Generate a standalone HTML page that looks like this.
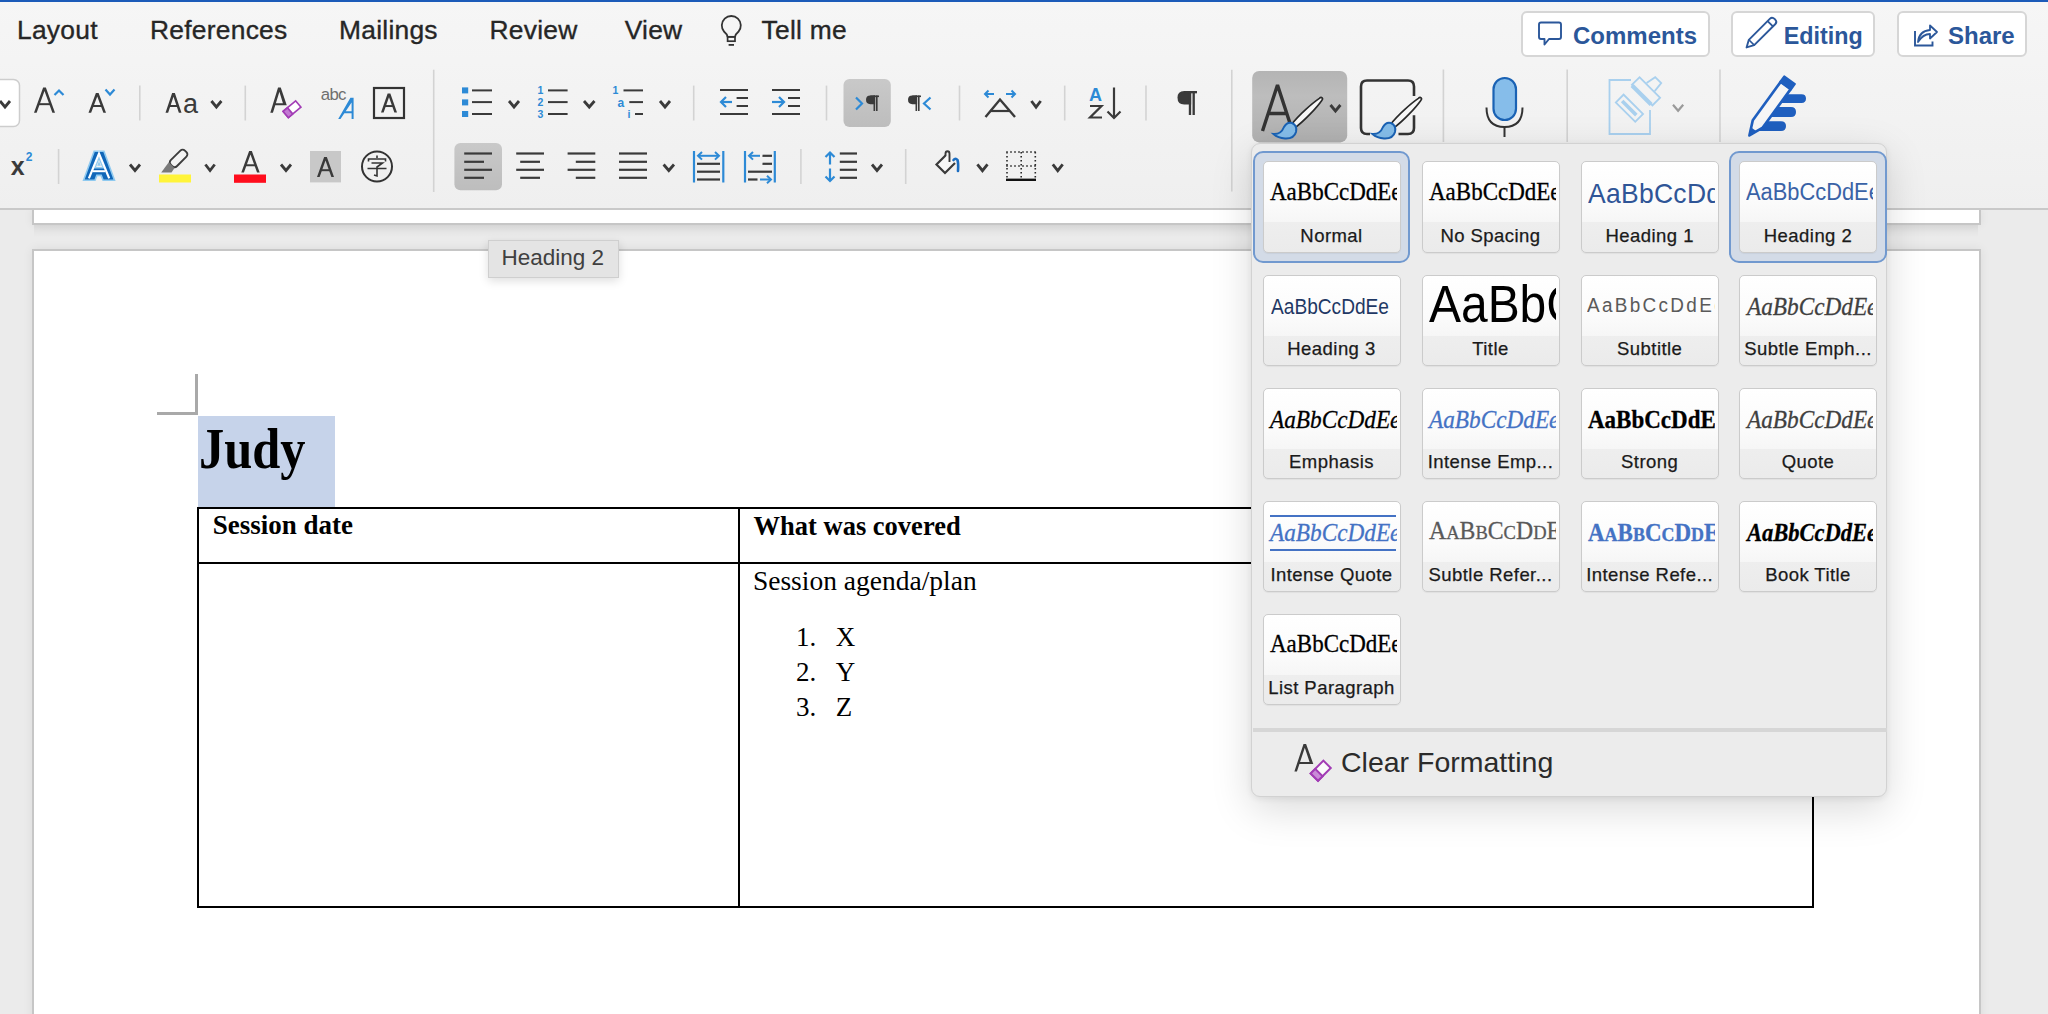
<!DOCTYPE html>
<html><head><meta charset="utf-8"><title>Word</title>
<style>
html,body{margin:0;padding:0;}
body{width:2048px;height:1014px;overflow:hidden;position:relative;background:#ebebeb;font-family:"Liberation Sans",sans-serif;}
.t{position:absolute;white-space:nowrap;line-height:1;}
.r{position:absolute;box-sizing:border-box;}
svg{position:absolute;left:0;top:0;overflow:visible}
</style></head><body>
<div class="r" style="left:0px;top:0px;width:2048px;height:210px;background:linear-gradient(#f6f6f6,#efefef);"></div>
<div class="r" style="left:0px;top:0px;width:2048px;height:2px;background:#1c5bb9;"></div>
<div class="r" style="left:0px;top:208px;width:2048px;height:2px;background:#c9c9c9;"></div>
<div class="r" style="left:0px;top:210px;width:2048px;height:804px;background:#ebebeb;"></div>
<div class="r" style="left:31.5px;top:210px;width:1949.0px;height:15px;background:#fff;border:2px solid #c6c6c6;border-top:none;box-shadow:0 0 10px rgba(0,0,0,0.07);clip-path:inset(0 -12px -12px -12px);"></div>
<div class="r" style="left:34px;top:225px;width:1944px;height:12px;background:linear-gradient(rgba(0,0,0,0.06),rgba(0,0,0,0));"></div>
<div class="r" style="left:31.5px;top:249px;width:1949.0px;height:781px;background:#fff;border:2px solid #c6c6c6;box-shadow:0 0 10px rgba(0,0,0,0.07);"></div>
<div class="r" style="left:0px;top:208px;width:2048px;height:2px;background:#c9c9c9;"></div>
<div class="t" style="left:17.0px;top:17.4px;font-family:'Liberation Sans', sans-serif;font-size:26.4px;font-weight:400;font-style:normal;color:#262626;-webkit-text-stroke:0.35px #262626;letter-spacing:0.25px;">Layout</div>
<div class="t" style="left:150.0px;top:17.4px;font-family:'Liberation Sans', sans-serif;font-size:26.4px;font-weight:400;font-style:normal;color:#262626;-webkit-text-stroke:0.35px #262626;letter-spacing:0.25px;">References</div>
<div class="t" style="left:339.0px;top:17.4px;font-family:'Liberation Sans', sans-serif;font-size:26.4px;font-weight:400;font-style:normal;color:#262626;-webkit-text-stroke:0.35px #262626;letter-spacing:0.25px;">Mailings</div>
<div class="t" style="left:489.5px;top:17.4px;font-family:'Liberation Sans', sans-serif;font-size:26.4px;font-weight:400;font-style:normal;color:#262626;-webkit-text-stroke:0.35px #262626;letter-spacing:0.25px;">Review</div>
<div class="t" style="left:624.7px;top:17.4px;font-family:'Liberation Sans', sans-serif;font-size:26.4px;font-weight:400;font-style:normal;color:#262626;-webkit-text-stroke:0.35px #262626;letter-spacing:0.25px;">View</div>
<div class="t" style="left:761.6px;top:17.4px;font-family:'Liberation Sans', sans-serif;font-size:26.4px;font-weight:400;font-style:normal;color:#262626;-webkit-text-stroke:0.35px #262626;letter-spacing:0.25px;">Tell me</div>
<div class="r" style="left:1520.5px;top:10.5px;width:189.20000000000005px;height:46.5px;background:#fff;border:2px solid #d6d6d6;border-radius:6px;"></div>
<div class="r" style="left:1731px;top:10.5px;width:144.29999999999995px;height:46.5px;background:#fff;border:2px solid #d6d6d6;border-radius:6px;"></div>
<div class="r" style="left:1896.6px;top:10.5px;width:130.9000000000001px;height:46.5px;background:#fff;border:2px solid #d6d6d6;border-radius:6px;"></div>
<div class="t" style="left:1573.0px;top:23.9px;font-family:'Liberation Sans', sans-serif;font-size:24px;font-weight:700;font-style:normal;color:#2b579a;">Comments</div>
<div class="t" style="left:1783.7px;top:24.5px;font-family:'Liberation Sans', sans-serif;font-size:23.3px;font-weight:700;font-style:normal;color:#2b579a;">Editing</div>
<div class="t" style="left:1948.0px;top:23.9px;font-family:'Liberation Sans', sans-serif;font-size:24px;font-weight:700;font-style:normal;color:#2b579a;">Share</div>
<div class="r" style="left:487.5px;top:239.5px;width:131.5px;height:38.5px;background:#e4e4e4;border:1px solid #cfcfcf;box-shadow:0 3px 9px rgba(0,0,0,0.13);"></div>
<div class="t" style="left:501.5px;top:246.7px;font-family:'Liberation Sans', sans-serif;font-size:22.5px;font-weight:400;font-style:normal;color:#404040;">Heading 2</div>
<div class="r" style="left:157px;top:412px;width:41px;height:3px;background:#a9a9a9;"></div>
<div class="r" style="left:195px;top:374px;width:3px;height:41px;background:#a9a9a9;"></div>
<div class="r" style="left:198px;top:416px;width:137px;height:91px;background:#c6d3ea;"></div>
<div class="t" style="left:199.0px;top:420.9px;font-family:'Liberation Serif', serif;font-size:56px;font-weight:700;font-style:normal;color:#000;transform:scaleX(0.9);transform-origin:0 0;">Judy</div>
<div class="r" style="left:197px;top:507px;width:1617px;height:401px;border:2px solid #000;"></div>
<div class="r" style="left:738px;top:507px;width:2px;height:401px;background:#000;"></div>
<div class="r" style="left:197px;top:562px;width:1617px;height:2px;background:#000;"></div>
<div class="t" style="left:212.7px;top:512.3px;font-family:'Liberation Serif', serif;font-size:27px;font-weight:700;font-style:normal;color:#000;">Session date</div>
<div class="t" style="left:753.6px;top:512.5px;font-family:'Liberation Serif', serif;font-size:26.5px;font-weight:700;font-style:normal;color:#000;">What was covered</div>
<div class="t" style="left:752.9px;top:566.8px;font-family:'Liberation Serif', serif;font-size:27.5px;font-weight:400;font-style:normal;color:#000;">Session agenda/plan</div>
<div class="t" style="left:796.0px;top:623.5px;font-family:'Liberation Serif', serif;font-size:27px;font-weight:400;font-style:normal;color:#000;">1.</div>
<div class="t" style="left:835.7px;top:623.5px;font-family:'Liberation Serif', serif;font-size:27px;font-weight:400;font-style:normal;color:#000;">X</div>
<div class="t" style="left:796.0px;top:658.9px;font-family:'Liberation Serif', serif;font-size:27px;font-weight:400;font-style:normal;color:#000;">2.</div>
<div class="t" style="left:835.7px;top:658.9px;font-family:'Liberation Serif', serif;font-size:27px;font-weight:400;font-style:normal;color:#000;">Y</div>
<div class="t" style="left:796.0px;top:694.3px;font-family:'Liberation Serif', serif;font-size:27px;font-weight:400;font-style:normal;color:#000;">3.</div>
<div class="t" style="left:835.7px;top:694.3px;font-family:'Liberation Serif', serif;font-size:27px;font-weight:400;font-style:normal;color:#000;">Z</div>
<svg width="2048" height="210" viewBox="0 0 2048 210"><defs><linearGradient id="selg" x1="0" y1="0" x2="0" y2="1"><stop offset="0" stop-color="#c9c9c9"/><stop offset="1" stop-color="#bdbdbd"/></linearGradient><linearGradient id="styg" x1="0" y1="0" x2="0" y2="1"><stop offset="0" stop-color="#b4b4b4"/><stop offset="0.35" stop-color="#bdbdbd"/><stop offset="1" stop-color="#b0b0b0"/></linearGradient></defs><rect x="843.5" y="79" width="47.3" height="48" rx="6" fill="url(#selg)"/><rect x="454.4" y="143" width="47.6" height="47.2" rx="6" fill="url(#selg)"/><rect x="1252.2" y="71" width="95" height="71.4" rx="7" fill="url(#styg)"/><rect x="-10" y="79.5" width="29.5" height="47" rx="6" fill="#fff" stroke="#cdcdcd" stroke-width="1.5"/><polyline points="0,101 5.0,107 10,101" stroke="#3a3a3a" stroke-width="2.8" fill="none" stroke-linejoin="miter" stroke-linecap="butt"/><path d="M34.00,112.70 L43.14,87.60 L45.86,87.60 L55.00,112.70 L52.36,112.70 L44.50,91.11 L36.64,112.70 Z" fill="#3a3a3a"/><rect x="38.43" y="103.18" width="12.15" height="1.98" fill="#3a3a3a"/><polyline points="54.5,95 59,90.5 63.5,95" stroke="#2d8ad6" stroke-width="2.2" fill="none" stroke-linejoin="miter" stroke-linecap="butt"/><path d="M88.50,112.70 L95.89,93.00 L98.61,93.00 L106.00,112.70 L103.36,112.70 L97.25,96.40 L91.14,112.70 Z" fill="#3a3a3a"/><rect x="92.33" y="105.01" width="9.84" height="1.98" fill="#3a3a3a"/><polyline points="105.5,89.5 110,94.5 114.5,89.5" stroke="#2d8ad6" stroke-width="2.2" fill="none" stroke-linejoin="miter" stroke-linecap="butt"/><line x1="139.8" y1="85.6" x2="139.8" y2="120.5" stroke="#d3d3d3" stroke-width="1.6" stroke-linecap="butt"/><path d="M165.50,112.70 L172.14,93.00 L174.86,93.00 L181.50,112.70 L178.86,112.70 L173.50,96.79 L168.14,112.70 Z" fill="#3a3a3a"/><rect x="169.08" y="105.01" width="8.85" height="1.98" fill="#3a3a3a"/><text x="183" y="112.7" font-family="Liberation Sans" font-size="27" font-weight="400" font-style="normal" fill="#3a3a3a" >a</text><polyline points="211.4,101 216.4,107 221.4,101" stroke="#3a3a3a" stroke-width="2.8" fill="none" stroke-linejoin="miter" stroke-linecap="butt"/><line x1="245.3" y1="85.6" x2="245.3" y2="120.5" stroke="#d3d3d3" stroke-width="1.6" stroke-linecap="butt"/><path fill-rule="evenodd" d="M270.30,112.70 L278.04,87.60 L280.76,87.60 L286.77,105.16 L275.27,105.16 L272.94,112.70 Z M279.40,91.74 L275.88,103.18 L282.92,103.18 Z" fill="#3a3a3a"/><g transform="translate(292,109.3) rotate(-40) scale(0.82)"><rect x="-10" y="-5" width="20" height="10" fill="#fff" stroke="#a23cb5" stroke-width="2"/><rect x="-10" y="-5" width="7" height="10" fill="#c27ad2" stroke="#a23cb5" stroke-width="2"/></g><text x="320.8" y="100.3" font-family="Liberation Sans" font-size="16.8" font-weight="400" font-style="normal" fill="#6e6e6e" letter-spacing="-0.7">abc</text><path d="M338.2,119 L350.4,97.8 L353.6,97.8 L353.6,119 L351.6,119 L351.6,102.4 L340.5,119 Z M343.6,111.2 L352,111.2 L352,113.2 L342.4,113.2 Z" fill="#2d8ad6"/><rect x="374" y="88" width="30" height="30" fill="none" stroke="#333" stroke-width="2.2"/><path d="M381.00,112.50 L387.64,93.50 L390.36,93.50 L397.00,112.50 L394.36,112.50 L389.00,97.15 L383.64,112.50 Z" fill="#3a3a3a"/><rect x="384.58" y="105.05" width="8.85" height="1.98" fill="#3a3a3a"/><line x1="433.7" y1="69.7" x2="433.7" y2="192" stroke="#d3d3d3" stroke-width="1.6"/><rect x="462" y="87.4" width="6.2" height="6" fill="#2d8ad6"/><rect x="462" y="99.4" width="6.2" height="6" fill="#2d8ad6"/><rect x="462" y="111" width="6.2" height="6" fill="#2d8ad6"/><line x1="472" y1="90.4" x2="492" y2="90.4" stroke="#3a3a3a" stroke-width="2" stroke-linecap="butt"/><line x1="472" y1="102.1" x2="492" y2="102.1" stroke="#3a3a3a" stroke-width="2" stroke-linecap="butt"/><line x1="472" y1="114" x2="492" y2="114" stroke="#3a3a3a" stroke-width="2" stroke-linecap="butt"/><polyline points="509,101 514.0,107 519,101" stroke="#3a3a3a" stroke-width="2.8" fill="none" stroke-linejoin="miter" stroke-linecap="butt"/><text x="537.5" y="94" font-family="Liberation Sans" font-size="10.5" font-weight="700" font-style="normal" fill="#2d8ad6" >1</text><text x="537.5" y="105.8" font-family="Liberation Sans" font-size="10.5" font-weight="700" font-style="normal" fill="#2d8ad6" >2</text><text x="537.5" y="117.5" font-family="Liberation Sans" font-size="10.5" font-weight="700" font-style="normal" fill="#2d8ad6" >3</text><line x1="548" y1="90.4" x2="567.6" y2="90.4" stroke="#3a3a3a" stroke-width="2" stroke-linecap="butt"/><line x1="548" y1="102.1" x2="567.6" y2="102.1" stroke="#3a3a3a" stroke-width="2" stroke-linecap="butt"/><line x1="548" y1="114" x2="567.6" y2="114" stroke="#3a3a3a" stroke-width="2" stroke-linecap="butt"/><polyline points="584,101 589.25,107 594.5,101" stroke="#3a3a3a" stroke-width="2.8" fill="none" stroke-linejoin="miter" stroke-linecap="butt"/><text x="612.5" y="94" font-family="Liberation Sans" font-size="10.5" font-weight="700" font-style="normal" fill="#2d8ad6" >1</text><text x="617.5" y="106.5" font-family="Liberation Sans" font-size="12" font-weight="700" font-style="normal" fill="#2d8ad6" >a</text><text x="627.5" y="118" font-family="Liberation Sans" font-size="10.5" font-weight="700" font-style="normal" fill="#2d8ad6" >i</text><line x1="623.5" y1="90.4" x2="643" y2="90.4" stroke="#3a3a3a" stroke-width="2" stroke-linecap="butt"/><line x1="629.3" y1="102.1" x2="643" y2="102.1" stroke="#3a3a3a" stroke-width="2" stroke-linecap="butt"/><line x1="635" y1="114" x2="643" y2="114" stroke="#3a3a3a" stroke-width="2" stroke-linecap="butt"/><polyline points="660,101 665.0,107 670,101" stroke="#3a3a3a" stroke-width="2.8" fill="none" stroke-linejoin="miter" stroke-linecap="butt"/><line x1="693.7" y1="85.6" x2="693.7" y2="120.5" stroke="#d3d3d3" stroke-width="1.6" stroke-linecap="butt"/><line x1="720" y1="90" x2="748" y2="90" stroke="#3a3a3a" stroke-width="2" stroke-linecap="butt"/><line x1="720" y1="114" x2="748" y2="114" stroke="#3a3a3a" stroke-width="2" stroke-linecap="butt"/><line x1="736.6" y1="98" x2="748" y2="98" stroke="#3a3a3a" stroke-width="2" stroke-linecap="butt"/><line x1="736.6" y1="106" x2="748" y2="106" stroke="#3a3a3a" stroke-width="2" stroke-linecap="butt"/><polyline points="726,97 721,102 726,107" stroke="#2d8ad6" stroke-width="2.2" fill="none" stroke-linejoin="miter" stroke-linecap="butt"/><line x1="721" y1="102" x2="732" y2="102" stroke="#2d8ad6" stroke-width="2.2" stroke-linecap="butt"/><line x1="772" y1="90" x2="800" y2="90" stroke="#3a3a3a" stroke-width="2" stroke-linecap="butt"/><line x1="772" y1="114" x2="800" y2="114" stroke="#3a3a3a" stroke-width="2" stroke-linecap="butt"/><line x1="788" y1="98" x2="800" y2="98" stroke="#3a3a3a" stroke-width="2" stroke-linecap="butt"/><line x1="788" y1="106" x2="800" y2="106" stroke="#3a3a3a" stroke-width="2" stroke-linecap="butt"/><polyline points="779,97 784,102 779,107" stroke="#2d8ad6" stroke-width="2.2" fill="none" stroke-linejoin="miter" stroke-linecap="butt"/><line x1="772" y1="102" x2="783.5" y2="102" stroke="#2d8ad6" stroke-width="2.2" stroke-linecap="butt"/><line x1="826.5" y1="85.6" x2="826.5" y2="120.5" stroke="#d3d3d3" stroke-width="1.6" stroke-linecap="butt"/><polyline points="856,97.5 862,103.5 856,109.5" stroke="#2d8ad6" stroke-width="2.2" fill="none" stroke-linejoin="miter" stroke-linecap="butt"/><path d="M875.12,95.5 H870.34 Q866,95.5 866,99.84 Q866,104.18 870.34,104.18 H875.12 Z" fill="#3a3a3a"/><rect x="873.5200000000001" y="95.5" width="1.6" height="15.5" fill="#3a3a3a"/><rect x="875.99" y="95.5" width="1.6" height="15.5" fill="#3a3a3a"/><rect x="870.34" y="95.5" width="8.66" height="1.6" fill="#3a3a3a"/><path d="M917.12,95.5 H912.34 Q908,95.5 908,99.84 Q908,104.18 912.34,104.18 H917.12 Z" fill="#3a3a3a"/><rect x="915.5200000000001" y="95.5" width="1.6" height="15.5" fill="#3a3a3a"/><rect x="917.99" y="95.5" width="1.6" height="15.5" fill="#3a3a3a"/><rect x="912.34" y="95.5" width="8.66" height="1.6" fill="#3a3a3a"/><polyline points="930.5,97.5 924,103.5 930.5,109.5" stroke="#2d8ad6" stroke-width="2.2" fill="none" stroke-linejoin="miter" stroke-linecap="butt"/><line x1="959.5" y1="85.6" x2="959.5" y2="120.5" stroke="#d3d3d3" stroke-width="1.6" stroke-linecap="butt"/><path d="M985.5,117 L1000,99.5 L1015,117" stroke="#3a3a3a" stroke-width="2.4" fill="none"/><line x1="990" y1="111" x2="1010" y2="111" stroke="#3a3a3a" stroke-width="2.2" stroke-linecap="butt"/><polyline points="988.5,90.5 985,94 988.5,97.5" stroke="#2d8ad6" stroke-width="2" fill="none" stroke-linejoin="miter" stroke-linecap="butt"/><line x1="985" y1="94" x2="994" y2="94" stroke="#2d8ad6" stroke-width="2" stroke-linecap="butt"/><polyline points="1011.5,90.5 1015,94 1011.5,97.5" stroke="#2d8ad6" stroke-width="2" fill="none" stroke-linejoin="miter" stroke-linecap="butt"/><line x1="1006" y1="94" x2="1015" y2="94" stroke="#2d8ad6" stroke-width="2" stroke-linecap="butt"/><polyline points="1031.4,101 1036.0500000000002,107.2 1040.7,101" stroke="#3a3a3a" stroke-width="2.8" fill="none" stroke-linejoin="miter" stroke-linecap="butt"/><line x1="1064.7" y1="85.6" x2="1064.7" y2="120.5" stroke="#d3d3d3" stroke-width="1.6" stroke-linecap="butt"/><text x="1089" y="100.8" font-family="Liberation Sans" font-size="18" font-weight="700" font-style="normal" fill="#2d8ad6" >A</text><path d="M1090,106 L1101.5,106 L1090,117.5 L1102,117.5" stroke="#3a3a3a" stroke-width="2.2" fill="none"/><line x1="1114" y1="87.5" x2="1114" y2="118" stroke="#3a3a3a" stroke-width="2.2" stroke-linecap="butt"/><polyline points="1107.5,111.5 1114,118 1120.5,111.5" stroke="#3a3a3a" stroke-width="2.2" fill="none" stroke-linejoin="miter" stroke-linecap="butt"/><line x1="1146" y1="85.6" x2="1146" y2="120.5" stroke="#d3d3d3" stroke-width="1.6" stroke-linecap="butt"/><path d="M1191.15,91 H1184.22 Q1177.5,91 1177.5,97.72 Q1177.5,104.44 1184.22,104.44 H1191.15 Z" fill="#3a3a3a"/><rect x="1188.81" y="91" width="2.34" height="24" fill="#3a3a3a"/><rect x="1192.5149999999999" y="91" width="2.34" height="24" fill="#3a3a3a"/><rect x="1184.22" y="91" width="12.78" height="2.34" fill="#3a3a3a"/><text x="10.8" y="174.8" font-family="Liberation Sans" font-size="25" font-weight="700" font-style="normal" fill="#3a3a3a" >x</text><text x="25.8" y="160.5" font-family="Liberation Sans" font-size="12" font-weight="700" font-style="normal" fill="#2d8ad6" >2</text><line x1="58.6" y1="149" x2="58.6" y2="184" stroke="#d3d3d3" stroke-width="1.6" stroke-linecap="butt"/><path fill-rule="evenodd" d="M83.6,180.3 L94.2,151.2 L103.9,151.2 L114.5,180.3 L103.1,180.3 L101.2,175.4 L96.8,175.4 L95,180.3 Z M99,157.6 L94.9,167.8 L103.2,167.8 Z" fill="#1066b8" stroke="#8fcaf0" stroke-width="1.6" stroke-linejoin="miter"/><polyline points="88.9,178.4 99,153.6 109.2,178.4" fill="none" stroke="#fff" stroke-width="2.2" stroke-linejoin="miter"/><line x1="92.8" y1="171.2" x2="105.2" y2="171.2" stroke="#fff" stroke-width="2"/><path d="M97.2,165.8 L99,161 L100.8,165.8 Z" fill="#8fcaf0"/><polyline points="130,164.5 135.0,170.5 140,164.5" stroke="#3a3a3a" stroke-width="2.8" fill="none" stroke-linejoin="miter" stroke-linecap="butt"/><g transform="translate(178.6,158.4) rotate(-45)"><rect x="-10" y="-4.3" width="20" height="8.6" rx="3.2" fill="#f4f4f4" stroke="#3d3d3d" stroke-width="1.9"/></g><path d="M168.8,162.3 L174.5,168 L171.5,172.6 L161.2,172.6 Z" fill="#7a7a7a"/><rect x="159" y="174.5" width="32" height="8" fill="#fff43a"/><polyline points="205.4,164.5 210.05,170.5 214.7,164.5" stroke="#3a3a3a" stroke-width="2.8" fill="none" stroke-linejoin="miter" stroke-linecap="butt"/><path d="M241.30,172.60 L249.14,151.00 L251.86,151.00 L259.70,172.60 L257.06,172.60 L250.50,154.52 L243.94,172.60 Z" fill="#3a3a3a"/><rect x="245.28" y="164.27" width="10.43" height="1.98" fill="#3a3a3a"/><rect x="234" y="174.5" width="32" height="8.3" fill="#ff0d1d"/><polyline points="281,164.5 286.0,170.5 291,164.5" stroke="#3a3a3a" stroke-width="2.8" fill="none" stroke-linejoin="miter" stroke-linecap="butt"/><rect x="310" y="151" width="31" height="31.4" fill="#c8c8c8"/><path d="M317.00,177.00 L324.14,157.00 L326.86,157.00 L334.00,177.00 L331.36,177.00 L325.50,160.58 L319.64,177.00 Z" fill="#3a3a3a"/><rect x="320.75" y="169.21" width="9.51" height="1.98" fill="#3a3a3a"/><circle cx="377" cy="166.5" r="15" fill="none" stroke="#333" stroke-width="2"/><path d="M377,155.5 L377,158 M368.5,161.5 L368.5,159 L385.5,159 L385.5,161.5 M371.5,163 L382.5,163 L377,167 L377,176 L374,175 M367.5,168.5 L386.5,168.5" stroke="#333" stroke-width="1.6" fill="none"/><line x1="464.2" y1="153.5" x2="492" y2="153.5" stroke="#3a3a3a" stroke-width="2.2" stroke-linecap="butt"/><line x1="464.2" y1="161.8" x2="484" y2="161.8" stroke="#3a3a3a" stroke-width="2.2" stroke-linecap="butt"/><line x1="464.2" y1="169.8" x2="492" y2="169.8" stroke="#3a3a3a" stroke-width="2.2" stroke-linecap="butt"/><line x1="464.2" y1="177.8" x2="484" y2="177.8" stroke="#3a3a3a" stroke-width="2.2" stroke-linecap="butt"/><line x1="516.2" y1="153.5" x2="544" y2="153.5" stroke="#3a3a3a" stroke-width="2.2" stroke-linecap="butt"/><line x1="520.2" y1="161.8" x2="540" y2="161.8" stroke="#3a3a3a" stroke-width="2.2" stroke-linecap="butt"/><line x1="516.2" y1="169.8" x2="544" y2="169.8" stroke="#3a3a3a" stroke-width="2.2" stroke-linecap="butt"/><line x1="520.2" y1="177.8" x2="540" y2="177.8" stroke="#3a3a3a" stroke-width="2.2" stroke-linecap="butt"/><line x1="567.6" y1="153.5" x2="595.3" y2="153.5" stroke="#3a3a3a" stroke-width="2.2" stroke-linecap="butt"/><line x1="575.8" y1="161.8" x2="595.3" y2="161.8" stroke="#3a3a3a" stroke-width="2.2" stroke-linecap="butt"/><line x1="567.6" y1="169.8" x2="595.3" y2="169.8" stroke="#3a3a3a" stroke-width="2.2" stroke-linecap="butt"/><line x1="575.8" y1="177.8" x2="595.3" y2="177.8" stroke="#3a3a3a" stroke-width="2.2" stroke-linecap="butt"/><line x1="619" y1="153.5" x2="647" y2="153.5" stroke="#3a3a3a" stroke-width="2.2" stroke-linecap="butt"/><line x1="619" y1="161.8" x2="647" y2="161.8" stroke="#3a3a3a" stroke-width="2.2" stroke-linecap="butt"/><line x1="619" y1="169.8" x2="647" y2="169.8" stroke="#3a3a3a" stroke-width="2.2" stroke-linecap="butt"/><line x1="619" y1="177.8" x2="647" y2="177.8" stroke="#3a3a3a" stroke-width="2.2" stroke-linecap="butt"/><polyline points="663.6,164.5 668.8,170.5 674,164.5" stroke="#3a3a3a" stroke-width="2.8" fill="none" stroke-linejoin="miter" stroke-linecap="butt"/><line x1="694" y1="151" x2="694" y2="182.5" stroke="#2d8ad6" stroke-width="2.2" stroke-linecap="butt"/><line x1="723.3" y1="151" x2="723.3" y2="182.5" stroke="#2d8ad6" stroke-width="2.2" stroke-linecap="butt"/><line x1="698" y1="155.8" x2="719" y2="155.8" stroke="#2d8ad6" stroke-width="2" stroke-linecap="butt"/><polyline points="702,152 698,155.8 702,159.6" stroke="#2d8ad6" stroke-width="2" fill="none" stroke-linejoin="miter" stroke-linecap="butt"/><polyline points="715,152 719,155.8 715,159.6" stroke="#2d8ad6" stroke-width="2" fill="none" stroke-linejoin="miter" stroke-linecap="butt"/><line x1="697" y1="163.8" x2="720" y2="163.8" stroke="#3a3a3a" stroke-width="2.2" stroke-linecap="butt"/><line x1="697" y1="171.7" x2="720" y2="171.7" stroke="#3a3a3a" stroke-width="2.2" stroke-linecap="butt"/><line x1="697" y1="179.5" x2="720" y2="179.5" stroke="#3a3a3a" stroke-width="2.2" stroke-linecap="butt"/><line x1="745" y1="151" x2="745" y2="182.5" stroke="#2d8ad6" stroke-width="2.2" stroke-linecap="butt"/><line x1="774.8" y1="151" x2="774.8" y2="182.5" stroke="#2d8ad6" stroke-width="2.2" stroke-linecap="butt"/><line x1="749" y1="155.8" x2="760" y2="155.8" stroke="#2d8ad6" stroke-width="2" stroke-linecap="butt"/><polyline points="753,152 749,155.8 753,159.6" stroke="#2d8ad6" stroke-width="2" fill="none" stroke-linejoin="miter" stroke-linecap="butt"/><line x1="762.5" y1="155.8" x2="772" y2="155.8" stroke="#3a3a3a" stroke-width="2.2" stroke-linecap="butt"/><line x1="762.5" y1="163.8" x2="772" y2="163.8" stroke="#3a3a3a" stroke-width="2.2" stroke-linecap="butt"/><line x1="748" y1="171.7" x2="772" y2="171.7" stroke="#3a3a3a" stroke-width="2.2" stroke-linecap="butt"/><line x1="748" y1="179.5" x2="757.5" y2="179.5" stroke="#3a3a3a" stroke-width="2.2" stroke-linecap="butt"/><line x1="760" y1="179.5" x2="771" y2="179.5" stroke="#2d8ad6" stroke-width="2" stroke-linecap="butt"/><polyline points="767,175.7 771,179.5 767,183.3" stroke="#2d8ad6" stroke-width="2" fill="none" stroke-linejoin="miter" stroke-linecap="butt"/><line x1="800.9" y1="149" x2="800.9" y2="184" stroke="#d3d3d3" stroke-width="1.6" stroke-linecap="butt"/><line x1="830" y1="152.5" x2="830" y2="164.5" stroke="#2d8ad6" stroke-width="2.2" stroke-linecap="butt"/><line x1="830" y1="168.5" x2="830" y2="181" stroke="#2d8ad6" stroke-width="2.2" stroke-linecap="butt"/><polyline points="825.5,157 830,152.5 834.5,157" stroke="#2d8ad6" stroke-width="2.2" fill="none" stroke-linejoin="miter" stroke-linecap="butt"/><polyline points="825.5,176.5 830,181 834.5,176.5" stroke="#2d8ad6" stroke-width="2.2" fill="none" stroke-linejoin="miter" stroke-linecap="butt"/><line x1="839.8" y1="153.5" x2="857" y2="153.5" stroke="#3a3a3a" stroke-width="2.2" stroke-linecap="butt"/><line x1="839.8" y1="161.8" x2="857" y2="161.8" stroke="#3a3a3a" stroke-width="2.2" stroke-linecap="butt"/><line x1="839.8" y1="169.8" x2="857" y2="169.8" stroke="#3a3a3a" stroke-width="2.2" stroke-linecap="butt"/><line x1="839.8" y1="177.8" x2="857" y2="177.8" stroke="#3a3a3a" stroke-width="2.2" stroke-linecap="butt"/><polyline points="872,164.5 877.0,170.5 882,164.5" stroke="#3a3a3a" stroke-width="2.8" fill="none" stroke-linejoin="miter" stroke-linecap="butt"/><line x1="905.7" y1="149" x2="905.7" y2="184" stroke="#d3d3d3" stroke-width="1.6" stroke-linecap="butt"/><path d="M945.5,155.5 L936.5,164.5 L945,173 L955,163" fill="#f8f8f8" stroke="#3a3a3a" stroke-width="2.2" stroke-linejoin="miter"/><path d="M949.5,162 V153.8 Q949.5,151.3 947.5,151.3 Q945.5,151.3 945.5,153.8 V156" fill="none" stroke="#3a3a3a" stroke-width="1.9"/><path d="M953.5,160 Q955.5,157.5 957.5,160 Q958.5,163 958,171" fill="none" stroke="#1b6dc1" stroke-width="2.6" stroke-linecap="round"/><polyline points="977.4,164.3 982.45,170.7 987.5,164.3" stroke="#3a3a3a" stroke-width="2.8" fill="none" stroke-linejoin="miter" stroke-linecap="butt"/><path d="M1006.2,152 H1036 M1007,152 V180 M1035.3,152 V180 M1021.2,152 V180 M1006.2,166 H1036" stroke="#2a2a2a" stroke-width="1.6" stroke-dasharray="1.6,2.4" fill="none"/><line x1="1006" y1="179.8" x2="1036" y2="179.8" stroke="#111" stroke-width="2.4" stroke-linecap="butt"/><polyline points="1052.8,164.3 1057.75,170.7 1062.7,164.3" stroke="#3a3a3a" stroke-width="2.8" fill="none" stroke-linejoin="miter" stroke-linecap="butt"/><line x1="1231.8" y1="69.8" x2="1231.8" y2="191.5" stroke="#d3d3d3" stroke-width="1.6"/><path d="M1262.5,131 L1277.5,85 L1292.5,131 M1267.5,113.5 L1287.5,113.5" stroke="#333" stroke-width="3.4" fill="none" stroke-linejoin="miter" stroke-miterlimit="2"/><g transform="translate(0,0)"><path d="M1294.11,128.45 C1305.23,120.25 1316.99,107.11 1321.62,100.65 Q1323.19,99.11 1322.08,97.96 Q1320.96,96.82 1319.38,98.35 C1312.81,102.81 1299.37,114.24 1290.89,125.15 Z" fill="#f7f7f7" stroke="#2a2a2a" stroke-width="1.7" stroke-linejoin="round"/><path d="M1273.5,134 Q1281,134.5 1284,127 Q1287,121.5 1292,123 Q1297.5,125.5 1296,132 Q1294,139 1285,138.5 Q1278,138 1273.5,134 Z" fill="#85bde9" stroke="#1a62b4" stroke-width="2"/></g><polyline points="1330.5,105 1335.45,111 1340.4,105" stroke="#3a3a3a" stroke-width="2.8" fill="none" stroke-linejoin="miter" stroke-linecap="butt"/><path d="M1370,134 H1367 Q1361,134 1361,128 V86.5 Q1361,80.5 1367,80.5 H1408 Q1414,80.5 1414,86.5 V96 M1414,115.3 V128 Q1414,134 1408,134 H1398.5" stroke="#333" stroke-width="2.6" fill="none"/><g transform="translate(99,0)"><path d="M1294.11,128.45 C1305.23,120.25 1316.99,107.11 1321.62,100.65 Q1323.19,99.11 1322.08,97.96 Q1320.96,96.82 1319.38,98.35 C1312.81,102.81 1299.37,114.24 1290.89,125.15 Z" fill="#f7f7f7" stroke="#2a2a2a" stroke-width="1.7" stroke-linejoin="round"/><path d="M1273.5,134 Q1281,134.5 1284,127 Q1287,121.5 1292,123 Q1297.5,125.5 1296,132 Q1294,139 1285,138.5 Q1278,138 1273.5,134 Z" fill="#85bde9" stroke="#1a62b4" stroke-width="2"/></g><line x1="1443.4" y1="69.5" x2="1443.4" y2="142" stroke="#d3d3d3" stroke-width="1.6"/><rect x="1493.5" y="78" width="22.5" height="42" rx="11.2" fill="#86bdea" stroke="#1a62b4" stroke-width="2.2"/><path d="M1486.5,107.5 Q1486.5,127 1504.5,127 Q1522.5,127 1522.5,107.5" stroke="#333" stroke-width="2" fill="none"/><line x1="1504.5" y1="127" x2="1504.5" y2="137" stroke="#333" stroke-width="2" stroke-linecap="butt"/><line x1="1567.2" y1="69.5" x2="1567.2" y2="142" stroke="#d3d3d3" stroke-width="1.6"/><path d="M1631,80 H1609.5 V134 H1650 V110" stroke="#a9d0ee" stroke-width="1.8" fill="none"/><g transform="translate(1646,91.3) rotate(45)"><rect x="-14.5" y="-5.4" width="29" height="10.8" fill="#f3f3f3" stroke="#a9d0ee" stroke-width="1.8"/><rect x="-14" y="3.6" width="27" height="4.2" fill="#a9d0ee"/><path d="M-5.5,-6.3 L-3.5,-16.5 L5,-16.5 L6,-6.3" fill="none" stroke="#a9d0ee" stroke-width="1.8"/><rect x="-13.5" y="18.2" width="27.5" height="11" fill="#f3f3f3" stroke="#a9d0ee" stroke-width="1.8"/><rect x="-10" y="21.9" width="20" height="3.6" fill="#a9d0ee"/></g><polyline points="1673,104.8 1678.1,110.8 1683.2,104.8" stroke="#9a9a9a" stroke-width="2.2" fill="none" stroke-linejoin="miter" stroke-linecap="butt"/><line x1="1720" y1="69.5" x2="1720" y2="142" stroke="#d3d3d3" stroke-width="1.6"/><path d="M1784,94.3 H1801.5 Q1806,94.3 1806,98.6 Q1806,103 1801.5,103 H1778 Z M1775,107 H1791 Q1796,107 1796,112 Q1796,117 1791,117 H1767 Z M1766,121.3 H1781 Q1786,121.3 1786,126 Q1786,131 1781,131 H1758 Z" fill="#1f5fbf"/><g transform="translate(1769.5,107.8) rotate(36) scale(0.95)"><path d="M-6.5,-29 L6.5,-29 L6.5,21 L0,36 L-6.5,21 Z" fill="#f6f6f6" stroke="#1f5fbf" stroke-width="2.8" stroke-linejoin="round"/><rect x="-8" y="-37" width="16" height="9" rx="1" fill="#1f5fbf"/><path d="M-3,28 L0,36 L3,28 Z" fill="#1f5fbf"/></g><path d="M727.6,36.8 Q727.2,34.3 724.2,31.8 A9.5,9.5 0 1 1 738.4,31.8 Q735.4,34.3 735,36.8 Z" fill="none" stroke="#333" stroke-width="1.8" stroke-linejoin="round"/><rect x="727.6" y="36.8" width="7.4" height="4.4" fill="none" stroke="#333" stroke-width="1.7"/><line x1="728.6" y1="44.9" x2="734" y2="44.9" stroke="#333" stroke-width="1.8" stroke-linecap="butt"/><path d="M1541,22.5 H1559 Q1561,22.5 1561,24.5 V37 Q1561,39 1559,39 H1549 L1544.5,44.5 V39 H1541 Q1539,39 1539,37 V24.5 Q1539,22.5 1541,22.5 Z" fill="none" stroke="#2b579a" stroke-width="1.9" stroke-linejoin="round"/><g transform="translate(1760,34) rotate(45)"><path d="M-3.8,-18 Q-3.8,-21 0,-21 Q3.8,-21 3.8,-18 L3.8,12 L0,19 L-3.8,12 Z" fill="none" stroke="#2b579a" stroke-width="1.9" stroke-linejoin="round"/><line x1="-3.8" y1="-14.5" x2="3.8" y2="-14.5" stroke="#2b579a" stroke-width="1.8"/><line x1="-3.8" y1="12" x2="3.8" y2="12" stroke="#2b579a" stroke-width="1.6"/></g><path d="M1915,31 V45.5 H1932.5 V41.5" fill="none" stroke="#2b579a" stroke-width="1.9"/><path d="M1918,42 Q1919,31 1930,30 V25.5 L1937,32 L1930,38.5 V34 Q1923,34 1918,42 Z" fill="none" stroke="#2b579a" stroke-width="1.8" stroke-linejoin="round"/></svg>
<div class="r" style="left:1250.8px;top:143px;width:636.7px;height:653.8px;background:#ececec;border:1px solid #d2d2d2;border-radius:9px;box-shadow:0 12px 40px rgba(0,0,0,0.15),0 2px 6px rgba(0,0,0,0.07);"></div>
<div class="r" style="left:1252.7px;top:151.4px;width:157.6px;height:112.0px;background:#d3dbe7;border:2px solid #7199cf;border-radius:10px;"></div>
<div class="r" style="left:1729.2px;top:151.4px;width:157.6px;height:112.0px;background:#d3dbe7;border:2px solid #7199cf;border-radius:10px;"></div>
<div class="r" style="left:1262.5px;top:161.4px;width:138px;height:91.5px;border:1px solid #cbcbcb;border-radius:5px;background:linear-gradient(#ffffff 0px,#fbfbfb 40px,#f6f6f6 60px,#eeeeee 60px,#ebebeb 100%);box-shadow:0 1px 1px rgba(0,0,0,0.05);"><div style="position:absolute;left:3px;top:0;right:3px;height:60px;overflow:hidden;"><div class="t" style="left:3.5999999999999996px;top:16.6px;font-family:'Liberation Serif', serif;font-size:25px;font-weight:400;font-style:normal;color:#000;letter-spacing:0px;-webkit-text-stroke:0.3px #000;transform:scaleX(0.92);transform-origin:0 0;">AaBbCcDdEe</div></div></div>
<div class="t" style="left:1262.5px;width:138px;text-align:center;top:227.0px;font-size:18.5px;letter-spacing:0.45px;color:#1a1a1a;-webkit-text-stroke:0.25px #1a1a1a;">Normal</div>
<div class="r" style="left:1421.5px;top:161.4px;width:138px;height:91.5px;border:1px solid #cbcbcb;border-radius:5px;background:linear-gradient(#ffffff 0px,#fbfbfb 40px,#f6f6f6 60px,#eeeeee 60px,#ebebeb 100%);box-shadow:0 1px 1px rgba(0,0,0,0.05);"><div style="position:absolute;left:3px;top:0;right:3px;height:60px;overflow:hidden;"><div class="t" style="left:3.5px;top:16.6px;font-family:'Liberation Serif', serif;font-size:25px;font-weight:400;font-style:normal;color:#000;letter-spacing:0px;-webkit-text-stroke:0.3px #000;transform:scaleX(0.92);transform-origin:0 0;">AaBbCcDdEe</div></div></div>
<div class="t" style="left:1421.5px;width:138px;text-align:center;top:227.0px;font-size:18.5px;letter-spacing:0.45px;color:#1a1a1a;-webkit-text-stroke:0.25px #1a1a1a;">No Spacing</div>
<div class="r" style="left:1580.7px;top:161.4px;width:138px;height:91.5px;border:1px solid #cbcbcb;border-radius:5px;background:linear-gradient(#ffffff 0px,#fbfbfb 40px,#f6f6f6 60px,#eeeeee 60px,#ebebeb 100%);box-shadow:0 1px 1px rgba(0,0,0,0.05);"><div style="position:absolute;left:3px;top:0;right:3px;height:60px;overflow:hidden;"><div class="t" style="left:3px;top:16.3px;font-family:'Liberation Sans', sans-serif;font-size:28.5px;font-weight:400;font-style:normal;color:#2f5597;letter-spacing:0.3px;transform:scaleX(0.93);transform-origin:0 0;">AaBbCcDdEe</div></div></div>
<div class="t" style="left:1580.7px;width:138px;text-align:center;top:227.0px;font-size:18.5px;letter-spacing:0.45px;color:#1a1a1a;-webkit-text-stroke:0.25px #1a1a1a;">Heading 1</div>
<div class="r" style="left:1739px;top:161.4px;width:138px;height:91.5px;border:1px solid #cbcbcb;border-radius:5px;background:linear-gradient(#ffffff 0px,#fbfbfb 40px,#f6f6f6 60px,#eeeeee 60px,#ebebeb 100%);box-shadow:0 1px 1px rgba(0,0,0,0.05);"><div style="position:absolute;left:3px;top:0;right:3px;height:60px;overflow:hidden;"><div class="t" style="left:3.2px;top:18.9px;font-family:'Liberation Sans', sans-serif;font-size:23.5px;font-weight:400;font-style:normal;color:#3962a6;letter-spacing:0px;transform:scaleX(0.93);transform-origin:0 0;">AaBbCcDdEe</div></div></div>
<div class="t" style="left:1739px;width:138px;text-align:center;top:227.0px;font-size:18.5px;letter-spacing:0.45px;color:#1a1a1a;-webkit-text-stroke:0.25px #1a1a1a;">Heading 2</div>
<div class="r" style="left:1262.5px;top:274.6px;width:138px;height:91.5px;border:1px solid #cbcbcb;border-radius:5px;background:linear-gradient(#ffffff 0px,#fbfbfb 40px,#f6f6f6 60px,#eeeeee 60px,#ebebeb 100%);box-shadow:0 1px 1px rgba(0,0,0,0.05);"><div style="position:absolute;left:3px;top:0;right:3px;height:60px;overflow:hidden;"><div class="t" style="left:4.9px;top:20.1px;font-family:'Liberation Sans', sans-serif;font-size:22.5px;font-weight:400;font-style:normal;color:#1f3864;letter-spacing:0px;transform:scaleX(0.85);transform-origin:0 0;">AaBbCcDdEe</div></div></div>
<div class="t" style="left:1262.5px;width:138px;text-align:center;top:340.2px;font-size:18.5px;letter-spacing:0.45px;color:#1a1a1a;-webkit-text-stroke:0.25px #1a1a1a;">Heading 3</div>
<div class="r" style="left:1421.5px;top:274.6px;width:138px;height:91.5px;border:1px solid #cbcbcb;border-radius:5px;background:linear-gradient(#ffffff 0px,#fbfbfb 40px,#f6f6f6 60px,#eeeeee 60px,#ebebeb 100%);box-shadow:0 1px 1px rgba(0,0,0,0.05);"><div style="position:absolute;left:3px;top:0;right:3px;height:60px;overflow:hidden;"><div class="t" style="left:3.5px;top:3.5px;font-family:'Liberation Sans', sans-serif;font-size:51px;font-weight:400;font-style:normal;color:#000;letter-spacing:0px;transform:scaleX(0.94);transform-origin:0 0;">AaBbC</div></div></div>
<div class="t" style="left:1421.5px;width:138px;text-align:center;top:340.2px;font-size:18.5px;letter-spacing:0.45px;color:#1a1a1a;-webkit-text-stroke:0.25px #1a1a1a;">Title</div>
<div class="r" style="left:1580.7px;top:274.6px;width:138px;height:91.5px;border:1px solid #cbcbcb;border-radius:5px;background:linear-gradient(#ffffff 0px,#fbfbfb 40px,#f6f6f6 60px,#eeeeee 60px,#ebebeb 100%);box-shadow:0 1px 1px rgba(0,0,0,0.05);"><div style="position:absolute;left:3px;top:0;right:3px;height:60px;overflow:hidden;"><div class="t" style="left:2.8px;top:20.2px;font-family:'Liberation Sans', sans-serif;font-size:19.5px;font-weight:400;font-style:normal;color:#5a5a5a;letter-spacing:2.4px;transform:scaleX(0.97);transform-origin:0 0;">AaBbCcDdEe</div></div></div>
<div class="t" style="left:1580.7px;width:138px;text-align:center;top:340.2px;font-size:18.5px;letter-spacing:0.45px;color:#1a1a1a;-webkit-text-stroke:0.25px #1a1a1a;">Subtitle</div>
<div class="r" style="left:1739px;top:274.6px;width:138px;height:91.5px;border:1px solid #cbcbcb;border-radius:5px;background:linear-gradient(#ffffff 0px,#fbfbfb 40px,#f6f6f6 60px,#eeeeee 60px,#ebebeb 100%);box-shadow:0 1px 1px rgba(0,0,0,0.05);"><div style="position:absolute;left:3px;top:0;right:3px;height:60px;overflow:hidden;"><div class="t" style="left:3.8px;top:18.2px;font-family:'Liberation Serif', serif;font-size:25px;font-weight:400;font-style:italic;color:#404040;letter-spacing:0px;-webkit-text-stroke:0.3px #404040;transform:scaleX(0.93);transform-origin:0 0;">AaBbCcDdEe</div></div></div>
<div class="t" style="left:1739px;width:138px;text-align:center;top:340.2px;font-size:18.5px;letter-spacing:0.45px;color:#1a1a1a;-webkit-text-stroke:0.25px #1a1a1a;">Subtle Emph...</div>
<div class="r" style="left:1262.5px;top:387.5px;width:138px;height:91.5px;border:1px solid #cbcbcb;border-radius:5px;background:linear-gradient(#ffffff 0px,#fbfbfb 40px,#f6f6f6 60px,#eeeeee 60px,#ebebeb 100%);box-shadow:0 1px 1px rgba(0,0,0,0.05);"><div style="position:absolute;left:3px;top:0;right:3px;height:60px;overflow:hidden;"><div class="t" style="left:3.5px;top:18.1px;font-family:'Liberation Serif', serif;font-size:25px;font-weight:400;font-style:italic;color:#000;letter-spacing:0px;-webkit-text-stroke:0.3px #000;transform:scaleX(0.93);transform-origin:0 0;">AaBbCcDdEe</div></div></div>
<div class="t" style="left:1262.5px;width:138px;text-align:center;top:453.1px;font-size:18.5px;letter-spacing:0.45px;color:#1a1a1a;-webkit-text-stroke:0.25px #1a1a1a;">Emphasis</div>
<div class="r" style="left:1421.5px;top:387.5px;width:138px;height:91.5px;border:1px solid #cbcbcb;border-radius:5px;background:linear-gradient(#ffffff 0px,#fbfbfb 40px,#f6f6f6 60px,#eeeeee 60px,#ebebeb 100%);box-shadow:0 1px 1px rgba(0,0,0,0.05);"><div style="position:absolute;left:3px;top:0;right:3px;height:60px;overflow:hidden;"><div class="t" style="left:3.5px;top:18.1px;font-family:'Liberation Serif', serif;font-size:25px;font-weight:400;font-style:italic;color:#4472c4;letter-spacing:0px;-webkit-text-stroke:0.3px #4472c4;transform:scaleX(0.93);transform-origin:0 0;">AaBbCcDdEe</div></div></div>
<div class="t" style="left:1421.5px;width:138px;text-align:center;top:453.1px;font-size:18.5px;letter-spacing:0.45px;color:#1a1a1a;-webkit-text-stroke:0.25px #1a1a1a;">Intense Emp...</div>
<div class="r" style="left:1580.7px;top:387.5px;width:138px;height:91.5px;border:1px solid #cbcbcb;border-radius:5px;background:linear-gradient(#ffffff 0px,#fbfbfb 40px,#f6f6f6 60px,#eeeeee 60px,#ebebeb 100%);box-shadow:0 1px 1px rgba(0,0,0,0.05);"><div style="position:absolute;left:3px;top:0;right:3px;height:60px;overflow:hidden;"><div class="t" style="left:3.2px;top:18.4px;font-family:'Liberation Serif', serif;font-size:25px;font-weight:700;font-style:normal;color:#000;letter-spacing:0px;-webkit-text-stroke:0.3px #000;transform:scaleX(0.92);transform-origin:0 0;">AaBbCcDdEe</div></div></div>
<div class="t" style="left:1580.7px;width:138px;text-align:center;top:453.1px;font-size:18.5px;letter-spacing:0.45px;color:#1a1a1a;-webkit-text-stroke:0.25px #1a1a1a;">Strong</div>
<div class="r" style="left:1739px;top:387.5px;width:138px;height:91.5px;border:1px solid #cbcbcb;border-radius:5px;background:linear-gradient(#ffffff 0px,#fbfbfb 40px,#f6f6f6 60px,#eeeeee 60px,#ebebeb 100%);box-shadow:0 1px 1px rgba(0,0,0,0.05);"><div style="position:absolute;left:3px;top:0;right:3px;height:60px;overflow:hidden;"><div class="t" style="left:3.8px;top:18.1px;font-family:'Liberation Serif', serif;font-size:25px;font-weight:400;font-style:italic;color:#404040;letter-spacing:0px;-webkit-text-stroke:0.3px #404040;transform:scaleX(0.93);transform-origin:0 0;">AaBbCcDdEe</div></div></div>
<div class="t" style="left:1739px;width:138px;text-align:center;top:453.1px;font-size:18.5px;letter-spacing:0.45px;color:#1a1a1a;-webkit-text-stroke:0.25px #1a1a1a;">Quote</div>
<div class="r" style="left:1262.5px;top:500.5px;width:138px;height:91.5px;border:1px solid #cbcbcb;border-radius:5px;background:linear-gradient(#ffffff 0px,#fbfbfb 40px,#f6f6f6 60px,#eeeeee 60px,#ebebeb 100%);box-shadow:0 1px 1px rgba(0,0,0,0.05);"><div style="position:absolute;left:3px;top:0;right:3px;height:60px;overflow:hidden;"><div class="t" style="left:3.3px;top:18.1px;font-family:'Liberation Serif', serif;font-size:25px;font-weight:400;font-style:italic;color:#4472c4;letter-spacing:0px;-webkit-text-stroke:0.3px #4472c4;transform:scaleX(0.93);transform-origin:0 0;">AaBbCcDdEe</div><div class="r" style="left:3.3px;top:13.3px;width:126.2px;height:2px;background:#4472c4;"></div><div class="r" style="left:3.3px;top:47.1px;width:126.2px;height:2px;background:#4472c4;"></div></div></div>
<div class="t" style="left:1262.5px;width:138px;text-align:center;top:566.1px;font-size:18.5px;letter-spacing:0.45px;color:#1a1a1a;-webkit-text-stroke:0.25px #1a1a1a;">Intense Quote</div>
<div class="r" style="left:1421.5px;top:500.5px;width:138px;height:91.5px;border:1px solid #cbcbcb;border-radius:5px;background:linear-gradient(#ffffff 0px,#fbfbfb 40px,#f6f6f6 60px,#eeeeee 60px,#ebebeb 100%);box-shadow:0 1px 1px rgba(0,0,0,0.05);"><div style="position:absolute;left:3px;top:0;right:3px;height:60px;overflow:hidden;"><div class="t" style="left:3.5px;top:16.5px;font-family:'Liberation Serif', serif;font-size:25px;font-weight:400;font-style:normal;color:#595959;letter-spacing:0px;-webkit-text-stroke:0.3px #595959;transform:scaleX(0.95);transform-origin:0 0;">A<span style="font-size:0.78em">A</span>B<span style="font-size:0.78em">B</span>C<span style="font-size:0.78em">C</span>D<span style="font-size:0.78em">D</span>E<span style="font-size:0.78em">E</span></div></div></div>
<div class="t" style="left:1421.5px;width:138px;text-align:center;top:566.1px;font-size:18.5px;letter-spacing:0.45px;color:#1a1a1a;-webkit-text-stroke:0.25px #1a1a1a;">Subtle Refer...</div>
<div class="r" style="left:1580.7px;top:500.5px;width:138px;height:91.5px;border:1px solid #cbcbcb;border-radius:5px;background:linear-gradient(#ffffff 0px,#fbfbfb 40px,#f6f6f6 60px,#eeeeee 60px,#ebebeb 100%);box-shadow:0 1px 1px rgba(0,0,0,0.05);"><div style="position:absolute;left:3px;top:0;right:3px;height:60px;overflow:hidden;"><div class="t" style="left:3.2px;top:18.4px;font-family:'Liberation Serif', serif;font-size:25px;font-weight:700;font-style:normal;color:#4472c4;letter-spacing:0px;-webkit-text-stroke:0.3px #4472c4;transform:scaleX(0.92);transform-origin:0 0;">A<span style="font-size:0.78em">A</span>B<span style="font-size:0.78em">B</span>C<span style="font-size:0.78em">C</span>D<span style="font-size:0.78em">D</span>E<span style="font-size:0.78em">E</span></div></div></div>
<div class="t" style="left:1580.7px;width:138px;text-align:center;top:566.1px;font-size:18.5px;letter-spacing:0.45px;color:#1a1a1a;-webkit-text-stroke:0.25px #1a1a1a;">Intense Refe...</div>
<div class="r" style="left:1739px;top:500.5px;width:138px;height:91.5px;border:1px solid #cbcbcb;border-radius:5px;background:linear-gradient(#ffffff 0px,#fbfbfb 40px,#f6f6f6 60px,#eeeeee 60px,#ebebeb 100%);box-shadow:0 1px 1px rgba(0,0,0,0.05);"><div style="position:absolute;left:3px;top:0;right:3px;height:60px;overflow:hidden;"><div class="t" style="left:3.8px;top:18.4px;font-family:'Liberation Serif', serif;font-size:25px;font-weight:700;font-style:italic;color:#000;letter-spacing:0px;-webkit-text-stroke:0.3px #000;transform:scaleX(0.9);transform-origin:0 0;">AaBbCcDdEe</div></div></div>
<div class="t" style="left:1739px;width:138px;text-align:center;top:566.1px;font-size:18.5px;letter-spacing:0.45px;color:#1a1a1a;-webkit-text-stroke:0.25px #1a1a1a;">Book Title</div>
<div class="r" style="left:1262.5px;top:613.5px;width:138px;height:91.5px;border:1px solid #cbcbcb;border-radius:5px;background:linear-gradient(#ffffff 0px,#fbfbfb 40px,#f6f6f6 60px,#eeeeee 60px,#ebebeb 100%);box-shadow:0 1px 1px rgba(0,0,0,0.05);"><div style="position:absolute;left:3px;top:0;right:3px;height:60px;overflow:hidden;"><div class="t" style="left:3.5999999999999996px;top:16.6px;font-family:'Liberation Serif', serif;font-size:25px;font-weight:400;font-style:normal;color:#000;letter-spacing:0px;-webkit-text-stroke:0.3px #000;transform:scaleX(0.92);transform-origin:0 0;">AaBbCcDdEe</div></div></div>
<div class="t" style="left:1262.5px;width:138px;text-align:center;top:679.1px;font-size:18.5px;letter-spacing:0.45px;color:#1a1a1a;-webkit-text-stroke:0.25px #1a1a1a;">List Paragraph</div>
<div class="r" style="left:1252.5px;top:728px;width:634.0px;height:4px;background:#d6d6d6;"></div>
<svg width="2048" height="1014" style="pointer-events:none"><path fill-rule="evenodd" d="M1294.40,771.50 L1303.50,744.00 L1306.10,744.00 L1313.29,763.92 L1299.43,763.92 L1296.92,771.50 Z M1304.80,747.68 L1300.05,762.03 L1309.55,762.03 Z" fill="#3a3a3a"/><g transform="translate(1320.7,770.7) rotate(-45)"><rect x="-9" y="-5.2" width="18" height="10.4" fill="#fbfbfb" stroke="#a23cb5" stroke-width="2"/><rect x="-9" y="-5.2" width="6.5" height="10.4" fill="#c98bd8" stroke="#a23cb5" stroke-width="2"/></g></svg>
<div class="t" style="left:1341.0px;top:748.4px;font-family:'Liberation Sans', sans-serif;font-size:28.5px;font-weight:400;font-style:normal;color:#2b2b2b;">Clear Formatting</div>
</body></html>
